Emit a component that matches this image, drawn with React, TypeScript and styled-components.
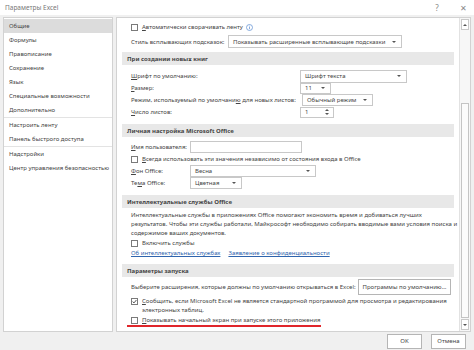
import styled, { createGlobalStyle } from 'styled-components';

const GlobalStyle = createGlobalStyle`
  html, body { margin: 0; padding: 0; background: #fff; }
  body { font-family: "Noto Sans", "Liberation Sans", sans-serif; }
`;

const Window = styled.div`
  width: 474px;
  height: 350px;
  display: flex;
  flex-direction: column;
  background: #f0f0f0;
  color: #444;
  font-size: 6px;
  overflow: hidden;
`;

const TitleBar = styled.div`
  height: 15px;
  display: flex;
  align-items: center;
  background: #fff;
  padding-left: 5px;
`;

const TitleText = styled.div`
  flex: 1;
  color: #777;
  font-size: 6.5px;
`;

const TitleControls = styled.div`
  display: flex;
  gap: 4px;
`;

const TitleButton = styled.div`
  width: 22px;
  height: 15px;
  display: flex;
  align-items: center;
  justify-content: center;
  color: #888;
  font-size: 8px;
`;

const Body = styled.div`
  flex: 1;
  display: flex;
  gap: 3px;
  padding: 2px 3px 0 3px;
  min-height: 0;
`;

const Sidebar = styled.div`
  width: 110px;
  background: #fff;
  border: 1px solid #d2d2d2;
  box-sizing: border-box;
  padding-top: 1px;
`;

const NavGroup = styled.div`
  border-bottom: 1px solid #e3e3e3;
  &:last-child { border-bottom: none; }
`;

const NavItem = styled.div<{ $active?: boolean }>`
  height: 14px;
  display: flex;
  align-items: center;
  padding-left: 5px;
  white-space: nowrap;
  background: ${p => (p.$active ? '#dcdcdc' : 'transparent')};
  color: #444;
`;

const Main = styled.div`
  flex: 1;
  display: flex;
  background: #fff;
  border: 1px solid #d2d2d2;
  box-sizing: border-box;
  min-width: 0;
`;

const Viewport = styled.div`
  flex: 1;
  overflow: hidden;
  padding: 0 5px;
`;

const Scroller = styled.div`
  margin-top: -10px;
  display: flex;
  flex-direction: column;
`;

const Row = styled.div<{ $h?: number }>`
  height: ${p => p.$h ?? 12}px;
  display: flex;
  align-items: center;
  padding-left: 9px;
  white-space: nowrap;
`;

const Label = styled.span<{ $w?: number }>`
  width: ${p => (p.$w ? `${p.$w}px` : 'auto')};
  flex-shrink: 0;
  white-space: nowrap;
`;

const Band = styled.div<{ $top: number }>`
  height: 13px;
  margin-top: ${p => p.$top}px;
  background: #e8e8e8;
  display: flex;
  align-items: center;
  padding-left: 5px;
  font-weight: 700;
  color: #444;
`;

const Section = styled.div<{ $pad: number }>`
  padding-top: ${p => p.$pad}px;
  display: flex;
  flex-direction: column;
`;

const Box = styled.span`
  width: 7px;
  height: 7px;
  border: 1px solid #7a7a7a;
  box-sizing: border-box;
  background: #fff;
  flex-shrink: 0;
  margin-right: 4px;
  display: inline-flex;
  align-items: center;
  justify-content: center;
`;

const Field = styled.div<{ $w: number; $h?: number }>`
  width: ${p => p.$w}px;
  height: ${p => p.$h ?? 12}px;
  box-sizing: border-box;
  border: 1px solid #c8c8c8;
  background: #fff;
  display: flex;
  align-items: center;
  padding-left: 4px;
  position: relative;
  color: #444;
`;

const Caret = styled.span`
  position: absolute;
  right: 5px;
  top: 50%;
  margin-top: -1px;
  border-left: 2px solid transparent;
  border-right: 2px solid transparent;
  border-top: 2px solid #555;
`;

const SpinArrows = styled.span`
  position: absolute;
  right: 4px;
  top: 1px;
  bottom: 1px;
  display: flex;
  flex-direction: column;
  justify-content: space-around;
`;

const ArrowUp = styled.span`
  border-left: 2px solid transparent;
  border-right: 2px solid transparent;
  border-bottom: 2px solid #555;
`;

const ArrowDown = styled.span`
  border-left: 2px solid transparent;
  border-right: 2px solid transparent;
  border-top: 2px solid #555;
`;

const Paragraph = styled.div`
  padding-left: 9px;
  line-height: 9px;
  white-space: nowrap;
`;

const Link = styled.span`
  color: #2f64ad;
  text-decoration: underline;
  margin-right: 8px;
`;

const PushButton = styled.div<{ $w: number; $h: number }>`
  width: ${p => p.$w}px;
  height: ${p => p.$h}px;
  box-sizing: border-box;
  border: 1px solid #b5b5b5;
  background: #fff;
  display: flex;
  align-items: center;
  justify-content: center;
  color: #444;
  white-space: nowrap;
`;

const WrapRow = styled.div`
  display: flex;
  align-items: flex-start;
  padding-left: 9px;
  line-height: 9px;
  margin-top: 2px;
  white-space: nowrap;
  & > ${Box} { margin-top: 1px; }
`;

const Highlight = styled.div`
  display: inline-flex;
  align-items: center;
  height: 10px;
  margin-left: 5px;
  padding-left: 4px;
  padding-right: 1px;
  border-bottom: 2px solid #e0262b;
  align-self: flex-start;
  white-space: nowrap;
`;

const Scrollbar = styled.div`
  width: 10px;
  display: flex;
  flex-direction: column;
  border-left: 1px solid #e2e2e2;
  background: #f7f7f7;
`;

const ScrollArrow = styled.div`
  height: 11px;
  display: flex;
  align-items: center;
  justify-content: center;
  border: 1px solid #c9c9c9;
  box-sizing: border-box;
  margin: 1px 1px;
  background: #fff;
`;

const ScrollTrack = styled.div`
  flex: 1;
  display: flex;
  flex-direction: column;
  padding: 72px 1px 0;
`;

const ScrollThumb = styled.div`
  flex: 1;
  background: #fbfbfb;
  border: 1px solid #c4c4c4;
`;

const Footer = styled.div`
  height: 18px;
  display: flex;
  align-items: center;
  justify-content: flex-end;
  gap: 9px;
  padding-right: 8px;
`;

const Info = () => (
  <svg width="7" height="7" viewBox="0 0 7 7" style={{ marginLeft: 3 }}>
    <circle cx="3.5" cy="3.5" r="3" fill="none" stroke="#6b97d6" strokeWidth="0.8" />
    <rect x="3.1" y="3" width="0.8" height="2.2" fill="#6b97d6" />
    <rect x="3.1" y="1.7" width="0.8" height="0.8" fill="#6b97d6" />
  </svg>
);

const Check = ({ on }: { on?: boolean }) => (
  <Box>
    {on && (
      <svg width="5" height="5" viewBox="0 0 5 5">
        <polyline points="0.6,2.6 2,3.9 4.4,1" fill="none" stroke="#444" strokeWidth="0.9" />
      </svg>
    )}
  </Box>
);

const Select = ({ w, h, children }: { w: number; h?: number; children: React.ReactNode }) => (
  <Field $w={w} $h={h}>
    {children}
    <Caret />
  </Field>
);

export default function App() {
  return (
    <>
      <GlobalStyle />
      <Window>
        <TitleBar>
          <TitleText>Параметры Excel</TitleText>
          <TitleControls>
            <TitleButton>?</TitleButton>
            <TitleButton>✕</TitleButton>
          </TitleControls>
        </TitleBar>
        <Body>
          <Sidebar>
            <NavGroup>
              <NavItem $active>Общие</NavItem>
              <NavItem>Формулы</NavItem>
              <NavItem>Правописание</NavItem>
              <NavItem>Сохранение</NavItem>
              <NavItem>Язык</NavItem>
              <NavItem>Специальные возможности</NavItem>
              <NavItem>Дополнительно</NavItem>
            </NavGroup>
            <NavGroup>
              <NavItem>Настроить ленту</NavItem>
              <NavItem>Панель быстрого доступа</NavItem>
            </NavGroup>
            <NavGroup>
              <NavItem>Надстройки</NavItem>
              <NavItem>Центр управления безопасностью</NavItem>
            </NavGroup>
          </Sidebar>
          <Main>
            <Viewport>
              <Scroller>
                <Row>
                  <Check />
                  <span><u>В</u>ключить динамический просмотр</span>
                </Row>
                <Row $h={14}>
                  <Check />
                  <span><u>А</u>втоматически сворачивать ленту</span>
                  <Info />
                </Row>
                <Row $h={15}>
                  <Label $w={97}>Стиль всплывающих подсказок:</Label>
                  <Select w={174} h={13}>Показывать расширенные всплывающие подсказки</Select>
                </Row>

                <Band $top={3}>При создании новых книг</Band>
                <Section $pad={5}>
                  <Row>
                    <Label $w={169}><u>Ш</u>рифт по умолчанию:</Label>
                    <Select w={107} h={13}>Шрифт текста</Select>
                  </Row>
                  <Row>
                    <Label $w={169}><u>Р</u>азмер:</Label>
                    <Select w={31} h={11}>11</Select>
                  </Row>
                  <Row>
                    <Label $w={171}>Режим, используемый по умолчани<u>ю</u> для новых листов:</Label>
                    <Select w={71}>Обычный режим</Select>
                  </Row>
                  <Row>
                    <Label $w={169}><u>Ч</u>исло листов:</Label>
                    <Field $w={34} $h={11}>
                      1
                      <SpinArrows>
                        <ArrowUp />
                        <ArrowDown />
                      </SpinArrows>
                    </Field>
                  </Row>
                </Section>

                <Band $top={6}>Личная настройка Microsoft Office</Band>
                <Section $pad={4}>
                  <Row>
                    <Label $w={59}><u>И</u>мя пользователя:</Label>
                    <Field $w={112} />
                  </Row>
                  <Row>
                    <Check />
                    <span><u>В</u>сегда использовать эти значения независимо от состояния входа в Office</span>
                  </Row>
                  <Row>
                    <Label $w={59}><u>Ф</u>он Office:</Label>
                    <Select w={126}>Весна</Select>
                  </Row>
                  <Row>
                    <Label $w={59}>Те<u>м</u>а Office:</Label>
                    <Select w={52}>Цветная</Select>
                  </Row>
                </Section>

                <Band $top={6}>Интеллектуальные службы Office</Band>
                <Section $pad={3}>
                  <Paragraph>
                    Интеллектуальные службы в приложениях Office помогают экономить время и добиваться лучших
                    <br />
                    результатов. Чтобы эти службы работали, Майкрософт необходимо собирать вводимые вами условия поиска и
                    <br />
                    содержимое ваших документов.
                  </Paragraph>
                  <Row $h={10}>
                    <Check />
                    <span>Включить службы</span>
                  </Row>
                  <Row $h={10}>
                    <Link>Об интеллектуальных службах</Link>
                    <Link>Заявление о конфиденциальности</Link>
                  </Row>
                </Section>

                <Band $top={6}>Параметры запуска</Band>
                <Section $pad={2}>
                  <Row $h={16}>
                    <Label $w={227}>Выберите расширения, которые должны по умолчанию открываться в Excel:</Label>
                    <PushButton $w={93} $h={16}>Программы по умолчанию...</PushButton>
                  </Row>
                  <WrapRow>
                    <Check on />
                    <span>
                      <u>С</u>ообщить, если Microsoft Excel не является стандартной программой для просмотра и редактирования
                      <br />
                      электронных таблиц.
                    </span>
                  </WrapRow>
                  <Highlight>
                    <Check />
                    <span><u>П</u>оказывать начальный экран при запуске этого приложения</span>
                  </Highlight>
                </Section>
              </Scroller>
            </Viewport>
            <Scrollbar>
              <ScrollArrow>
                <ArrowUp />
              </ScrollArrow>
              <ScrollTrack>
                <ScrollThumb />
              </ScrollTrack>
              <ScrollArrow>
                <ArrowDown />
              </ScrollArrow>
            </Scrollbar>
          </Main>
        </Body>
        <Footer>
          <PushButton $w={35} $h={15}>OK</PushButton>
          <PushButton $w={35} $h={15}>Отмена</PushButton>
        </Footer>
      </Window>
    </>
  );
}
